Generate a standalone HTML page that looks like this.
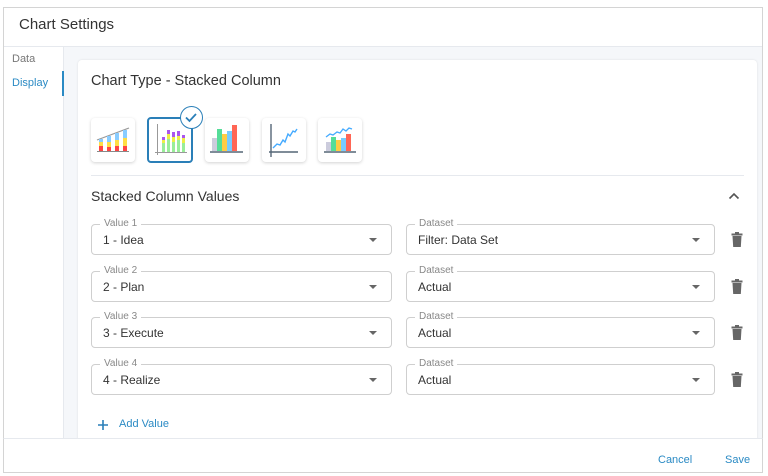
<!DOCTYPE html>
<html><head><meta charset="utf-8"><style>
*{box-sizing:border-box;margin:0;padding:0}
body{width:768px;height:476px;background:#fff;font-family:"Liberation Sans",sans-serif;position:relative;overflow:hidden;color:#333}
.frame{position:absolute;left:3px;top:7px;width:760px;height:466px;border:1px solid #d4d4d4;background:#fff}
.hdr{position:absolute;left:0;top:0;width:758px;height:39px;border-bottom:1px solid #e6e9ee;font-size:15px;padding:8px 0 0 15px;color:#333}
.side{position:absolute;left:0;top:39px;width:60px;height:391px;border-right:1px solid #e6e9ee;background:#fff}
.main{position:absolute;left:60px;top:39px;width:698px;height:391px;background:#f5f7fa}
.foot{position:absolute;left:3px;top:438px;width:760px;height:35px;border:1px solid #d4d4d4;border-top:1px solid #e6e9ee;background:#fff;z-index:5}
.ib{position:absolute;top:110px;width:44px;height:44px;border-radius:4px;background:#fff;box-shadow:0 1px 3px rgba(0,0,0,.18)}
.fld{position:absolute;height:31px;border:1px solid #cfcfcf;border-radius:4px;font-size:12px;color:#333}
.fld .lb{position:absolute;top:-7px;left:8px;background:#fff;padding:0 4px;font-size:10px;color:#888;line-height:12px}
.fld .v{position:absolute;left:11px;top:8px}
.fld .ar{position:absolute;right:14px;top:13px;width:0;height:0;border-left:4px solid transparent;border-right:4px solid transparent;border-top:4px solid #666}
.tr{position:absolute;width:12px;height:15px}
</style></head><body>
<div class="frame">
<div class="hdr">Chart Settings</div>
<div class="side">
<div style="position:absolute;left:8px;top:6px;font-size:11px;color:#777">Data</div>
<div style="position:absolute;left:8px;top:30px;font-size:11px;color:#2a8ac4">Display</div>
<div style="position:absolute;right:-1px;top:24px;width:2px;height:25px;background:#2a8ac4"></div>
</div>
<div class="main"></div>
</div>
<div style="position:absolute;left:78px;top:60px;width:679px;height:390px;background:#fff;border-radius:4px;box-shadow:0 0 2px rgba(0,0,0,.1)"></div>
<div class="foot">
<div style="position:absolute;left:654px;top:15px;font-size:11px;color:#2a8ac4">Cancel</div>
<div style="position:absolute;left:721px;top:15px;font-size:11px;color:#2a8ac4">Save</div>
</div>
<div style="position:absolute;left:91px;top:73px;font-size:14.5px;color:#333">Chart Type - Stacked Column</div>

<div class="ib" style="left:91px;top:118px"><svg width="44" height="44">
<line x1="6" y1="22" x2="38" y2="10" stroke="#999" stroke-width="1.2"/>
<rect x="8" y="28" width="4" height="5" fill="#f44"/><rect x="8" y="24" width="4" height="4" fill="#fd4"/><rect x="8" y="21" width="4" height="3" fill="#8cf"/>
<rect x="16" y="29" width="4" height="4" fill="#f44"/><rect x="16" y="24" width="4" height="5" fill="#fd4"/><rect x="16" y="18" width="4" height="6" fill="#8cf"/>
<rect x="24" y="28" width="4" height="5" fill="#f44"/><rect x="24" y="22" width="4" height="6" fill="#fd4"/><rect x="24" y="15" width="4" height="7" fill="#8cf"/>
<rect x="32" y="28" width="4" height="5" fill="#f44"/><rect x="32" y="20" width="4" height="8" fill="#fd4"/><rect x="32" y="12" width="4" height="8" fill="#8cf"/>
<line x1="6" y1="33.5" x2="38" y2="33.5" stroke="#888"/></svg></div>

<div style="position:absolute;left:147px;top:117px;width:46px;height:46px;border:2px solid #2a7fb8;border-radius:4px;background:#fff"><svg width="42" height="42">
<line x1="8.5" y1="5" x2="8.5" y2="36" stroke="#999"/><line x1="6" y1="33.5" x2="38" y2="33.5" stroke="#999"/>
<g><rect x="13" y="24" width="3" height="9" fill="#9e9"/><rect x="13" y="21" width="3" height="3" fill="#ee4"/><rect x="13" y="18" width="3" height="3" fill="#a5e"/>
<rect x="18" y="20" width="3" height="13" fill="#9e9"/><rect x="18" y="15" width="3" height="5" fill="#ee4"/><rect x="18" y="11" width="3" height="4" fill="#a5e"/>
<rect x="23" y="23" width="3" height="10" fill="#9e9"/><rect x="23" y="18" width="3" height="5" fill="#ee4"/><rect x="23" y="13" width="3" height="5" fill="#a5e"/>
<rect x="28" y="21" width="3" height="12" fill="#9e9"/><rect x="28" y="17" width="3" height="4" fill="#ee4"/><rect x="28" y="12" width="3" height="5" fill="#a5e"/>
<rect x="33" y="24" width="3" height="9" fill="#9e9"/><rect x="33" y="19" width="3" height="5" fill="#ee4"/><rect x="33" y="16" width="3" height="3" fill="#a5e"/></g></svg></div>
<div style="position:absolute;left:180px;top:106px;width:23px;height:23px;border-radius:50%;border:1.5px solid #2a7fb8;background:#fff"><svg width="20" height="20"><path d="M5 10.5 L8.5 14 L15 7" stroke="#2a7fb8" stroke-width="1.8" fill="none"/></svg></div>

<div class="ib" style="left:205px;top:118px"><svg width="44" height="44">
<rect x="7" y="20" width="5" height="13" fill="#ccd"/><rect x="12" y="11" width="5" height="22" fill="#5d9"/><rect x="17" y="16" width="5" height="17" fill="#fc4"/><rect x="22" y="13" width="5" height="20" fill="#7cf"/><rect x="27" y="7" width="5" height="26" fill="#f65"/>
<line x1="5" y1="34" x2="38" y2="34" stroke="#567" stroke-width="1.6"/></svg></div>

<div class="ib" style="left:262px;top:118px"><svg width="44" height="44">
<line x1="9" y1="6" x2="9" y2="39" stroke="#567" stroke-width="1.4"/><line x1="7" y1="34" x2="36" y2="34" stroke="#567" stroke-width="1.4"/>
<path d="M11 30 L15 26 L18 27 L21 22 L23 24 L26 16 L28 18 L31 13 L33 14 L35 11" stroke="#4af" stroke-width="1.4" fill="none"/></svg></div>

<div class="ib" style="left:318px;top:118px"><svg width="44" height="44">
<rect x="8" y="24" width="5" height="9" fill="#ccd"/><rect x="13" y="19" width="5" height="14" fill="#5d9"/><rect x="18" y="22" width="5" height="11" fill="#fc4"/><rect x="23" y="20" width="5" height="13" fill="#7cf"/><rect x="28" y="16" width="5" height="17" fill="#f65"/>
<path d="M8 19 L12 16 L15 17 L19 14 L22 15 L25 11 L28 13 L31 10 L34 11" stroke="#4af" stroke-width="1.3" fill="none"/>
<line x1="6" y1="34" x2="38" y2="34" stroke="#567" stroke-width="1.6"/></svg></div>

<div style="position:absolute;left:91px;top:175px;width:653px;height:1px;background:#e6e9ee"></div>
<div style="position:absolute;left:91px;top:188px;font-size:14px;color:#333">Stacked Column Values</div>
<svg style="position:absolute;left:728px;top:192px" width="12" height="8"><path d="M1.5 6.5 L6 2 L10.5 6.5" stroke="#555" stroke-width="1.6" fill="none"/></svg>

<div class="fld" style="left:91px;top:224px;width:301px"><span class="lb">Value 1</span><span class="v">1 - Idea</span><span class="ar"></span></div>
<div class="fld" style="left:406px;top:224px;width:309px"><span class="lb">Dataset</span><span class="v">Filter: Data Set</span><span class="ar"></span></div>
<div class="fld" style="left:91px;top:271px;width:301px"><span class="lb">Value 2</span><span class="v">2 - Plan</span><span class="ar"></span></div>
<div class="fld" style="left:406px;top:271px;width:309px"><span class="lb">Dataset</span><span class="v">Actual</span><span class="ar"></span></div>
<div class="fld" style="left:91px;top:317px;width:301px"><span class="lb">Value 3</span><span class="v">3 - Execute</span><span class="ar"></span></div>
<div class="fld" style="left:406px;top:317px;width:309px"><span class="lb">Dataset</span><span class="v">Actual</span><span class="ar"></span></div>
<div class="fld" style="left:91px;top:364px;width:301px"><span class="lb">Value 4</span><span class="v">4 - Realize</span><span class="ar"></span></div>
<div class="fld" style="left:406px;top:364px;width:309px"><span class="lb">Dataset</span><span class="v">Actual</span><span class="ar"></span></div>

<svg class="tr" style="left:731px;top:232px" viewBox="0 0 12 15"><rect x="0.5" y="1.5" width="11" height="2" fill="#666"/><rect x="4" y="0" width="4" height="2" fill="#666"/><path d="M1.5 4 H10.5 L9.8 15 H2.2Z" fill="#666"/></svg>
<svg class="tr" style="left:731px;top:279px" viewBox="0 0 12 15"><rect x="0.5" y="1.5" width="11" height="2" fill="#666"/><rect x="4" y="0" width="4" height="2" fill="#666"/><path d="M1.5 4 H10.5 L9.8 15 H2.2Z" fill="#666"/></svg>
<svg class="tr" style="left:731px;top:325px" viewBox="0 0 12 15"><rect x="0.5" y="1.5" width="11" height="2" fill="#666"/><rect x="4" y="0" width="4" height="2" fill="#666"/><path d="M1.5 4 H10.5 L9.8 15 H2.2Z" fill="#666"/></svg>
<svg class="tr" style="left:731px;top:372px" viewBox="0 0 12 15"><rect x="0.5" y="1.5" width="11" height="2" fill="#666"/><rect x="4" y="0" width="4" height="2" fill="#666"/><path d="M1.5 4 H10.5 L9.8 15 H2.2Z" fill="#666"/></svg>

<svg style="position:absolute;left:97px;top:419px" width="12" height="12"><path d="M6 1V11M1 6H11" stroke="#2a7fb8" stroke-width="1.6"/></svg>
<div style="position:absolute;left:119px;top:418px;font-size:11px;color:#2a8ac4">Add Value</div>
</body></html>
